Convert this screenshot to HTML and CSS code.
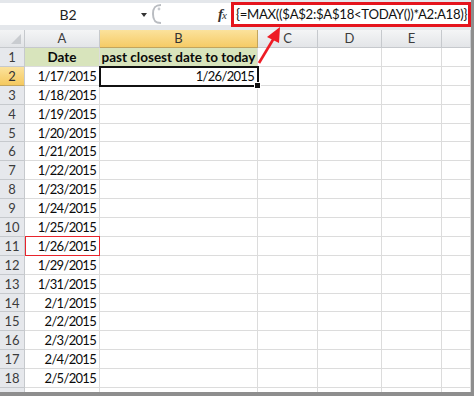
FILE: index.html
```html
<!DOCTYPE html>
<html>
<head>
<meta charset="utf-8">
<link rel="stylesheet" href="styles.css">
</head>
<body>
<div class="app">
  <div class="fbar">
    <div class="namebox"><span class="nb-text">B2</span><span class="caret"></span></div>
    <div class="fxarea">
      <svg class="splitter" width="12" height="20" viewBox="0 0 12 20"><path d="M9 1 C2 1 1 5 1 10 C1 15 2 19 9 19" fill="none" stroke="#b9bcc1" stroke-width="2"/><circle cx="7" cy="5" r="1.4" fill="#c8cbd0"/></svg>
      <span class="fx">f<span class="fx-x">x</span></span>
    </div>
    <div class="formula">{=MAX(($A$2:$A$18&lt;TODAY())*A2:A18)}</div>
  </div>
  <div class="sheet">
    <div class="corner"></div><div class="ch">A</div><div class="ch ch-sel">B</div><div class="ch">C</div><div class="ch">D</div><div class="ch">E</div><div class="ch"></div>

    <div class="rh">1</div><div class="c hdr">Date</div><div class="c hdr">past closest date to today</div><div class="c"></div><div class="c"></div><div class="c"></div><div class="c"></div>
    <div class="rh rh-sel">2</div><div class="c num">1/17/2015</div><div class="c num active">1/26/2015<span class="handle"></span></div><div class="c"></div><div class="c"></div><div class="c"></div><div class="c"></div>
    <div class="rh">3</div><div class="c num">1/18/2015</div><div class="c"></div><div class="c"></div><div class="c"></div><div class="c"></div><div class="c"></div>
    <div class="rh">4</div><div class="c num">1/19/2015</div><div class="c"></div><div class="c"></div><div class="c"></div><div class="c"></div><div class="c"></div>
    <div class="rh">5</div><div class="c num">1/20/2015</div><div class="c"></div><div class="c"></div><div class="c"></div><div class="c"></div><div class="c"></div>
    <div class="rh">6</div><div class="c num">1/21/2015</div><div class="c"></div><div class="c"></div><div class="c"></div><div class="c"></div><div class="c"></div>
    <div class="rh">7</div><div class="c num">1/22/2015</div><div class="c"></div><div class="c"></div><div class="c"></div><div class="c"></div><div class="c"></div>
    <div class="rh">8</div><div class="c num">1/23/2015</div><div class="c"></div><div class="c"></div><div class="c"></div><div class="c"></div><div class="c"></div>
    <div class="rh">9</div><div class="c num">1/24/2015</div><div class="c"></div><div class="c"></div><div class="c"></div><div class="c"></div><div class="c"></div>
    <div class="rh">10</div><div class="c num">1/25/2015</div><div class="c"></div><div class="c"></div><div class="c"></div><div class="c"></div><div class="c"></div>
    <div class="rh">11</div><div class="c num marked">1/26/2015<span class="mark-box"></span></div><div class="c"></div><div class="c"></div><div class="c"></div><div class="c"></div><div class="c"></div>
    <div class="rh">12</div><div class="c num">1/29/2015</div><div class="c"></div><div class="c"></div><div class="c"></div><div class="c"></div><div class="c"></div>
    <div class="rh">13</div><div class="c num">1/31/2015</div><div class="c"></div><div class="c"></div><div class="c"></div><div class="c"></div><div class="c"></div>
    <div class="rh">14</div><div class="c num">2/1/2015</div><div class="c"></div><div class="c"></div><div class="c"></div><div class="c"></div><div class="c"></div>
    <div class="rh">15</div><div class="c num">2/2/2015</div><div class="c"></div><div class="c"></div><div class="c"></div><div class="c"></div><div class="c"></div>
    <div class="rh">16</div><div class="c num">2/3/2015</div><div class="c"></div><div class="c"></div><div class="c"></div><div class="c"></div><div class="c"></div>
    <div class="rh">17</div><div class="c num">2/4/2015</div><div class="c"></div><div class="c"></div><div class="c"></div><div class="c"></div><div class="c"></div>
    <div class="rh">18</div><div class="c num">2/5/2015</div><div class="c"></div><div class="c"></div><div class="c"></div><div class="c"></div><div class="c"></div>
    <div class="rh"></div><div class="c"></div><div class="c"></div><div class="c"></div><div class="c"></div><div class="c"></div><div class="c"></div>
  </div>
  <svg class="arrow" width="474" height="80" viewBox="0 0 474 80">
    <line x1="259" y1="63" x2="274" y2="38" stroke="#ee1c25" stroke-width="2.6"/>
    <polygon points="280,27 267,37 279,43" fill="#ee1c25"/>
  </svg>
</div>
</body>
</html>
```

FILE: styles.css
```css
html, body {
  margin: 0;
  padding: 0;
  background: #ffffff;
}
body {
  width: 474px;
  height: 396px;
  overflow: hidden;
  font-family: Lato, "Liberation Sans", sans-serif;
  color: #111;
}
.app {
  position: relative;
  width: 471px;
  height: 392px;
  border-right: 3px solid #8e8e8e;
  border-bottom: 4px solid #8e8e8e;
  overflow: hidden;
}
.fbar {
  display: flex;
  height: 30px;
  box-sizing: border-box;
  padding: 3px 0 5px 0;
  background: #e4e7eb;
}
.namebox {
  width: 150px;
  background: #fff;
  display: flex;
  align-items: center;
  position: relative;
}
.nb-text {
  width: 136px;
  text-align: center;
  font-size: 14px;
  color: #222;
}
.caret {
  width: 0;
  height: 0;
  border-left: 3px solid transparent;
  border-right: 3px solid transparent;
  border-top: 4px solid #333;
  margin-left: 5px;
  margin-top: 2px;
}
.fxarea {
  width: 81px;
  background: #fff;
  display: flex;
  align-items: center;
  justify-content: space-between;
  padding: 0 5px 0 2px;
  box-sizing: border-box;
}
.splitter {
  display: block;
}
.fx {
  font-family: "Liberation Serif", serif;
  font-style: italic;
  font-weight: bold;
  font-size: 15px;
  color: #333;
  letter-spacing: -1px;
}
.fx-x {
  font-size: 11px;
  font-weight: normal;
}
.formula {
  flex: 1;
  margin: -1px 0 -2px 0;
  border: 3px solid #e5141d;
  background: #fff;
  font-size: 13.2px;
  letter-spacing: -0.3px;
  line-height: 18px;
  padding-left: 2px;
  color: #111;
  white-space: nowrap;
  overflow: hidden;
}
.sheet {
  display: grid;
  grid-template-columns: 25px 75px 158px 60px 64px 60px 29px;
  grid-template-rows: 18px repeat(19, 18.9px);
}
.corner {
  background: linear-gradient(#f3f4f5, #e2e4e7);
  border-right: 1px solid #c6c9cd;
  border-bottom: 1px solid #c6c9cd;
  position: relative;
}
.corner::after {
  content: "";
  position: absolute;
  right: 3px;
  bottom: 3px;
  width: 0;
  height: 0;
  border-left: 10px solid transparent;
  border-bottom: 10px solid #c9ccd0;
}
.ch {
  background: linear-gradient(#f4f5f6, #e3e5e8);
  border-right: 1px solid #c6c9cd;
  border-bottom: 1px solid #c6c9cd;
  text-align: center;
  font-size: 13px;
  line-height: 17px;
  color: #3c3c3c;
}
.ch-sel {
  background: linear-gradient(#fbe29c, #f6cb66);
  border-right-color: #c2a55e;
  border-bottom-color: #c2a55e;
  color: #333;
}
.rh {
  background: #e6e8ec;
  border-right: 1px solid #c6c9cd;
  border-bottom: 1px solid #c6c9cd;
  text-align: center;
  font-size: 13px;
  line-height: 18px;
  color: #3c3c3c;
  box-sizing: border-box;
}
.rh-sel {
  background: linear-gradient(#fbe29c, #f5c95f);
  border-bottom-color: #c2a55e;
  color: #333;
}
.c {
  border-right: 1px solid #dcdcdc;
  border-bottom: 1px solid #dcdcdc;
  font-size: 13px;
  line-height: 18px;
  white-space: nowrap;
  overflow: visible;
  box-sizing: border-box;
  position: relative;
  color: #0a0a0a;
}
.hdr {
  background: #d8e4bc;
  font-weight: bold;
  font-size: 13.5px;
  text-align: center;
}
.num {
  text-align: right;
  padding-right: 3px;
  letter-spacing: -0.7px;
}
.marked {
  z-index: 1;
}
.mark-box {
  position: absolute;
  left: 0;
  top: -1px;
  right: -1px;
  bottom: -1px;
  border: 1px solid #e8242c;
  pointer-events: none;
}
.active {
  outline: 2px solid #111;
  outline-offset: -1px;
  z-index: 2;
}
.handle {
  position: absolute;
  right: -4px;
  bottom: -4px;
  width: 5px;
  height: 5px;
  background: #111;
  border: 1px solid #fff;
}
.arrow {
  position: absolute;
  left: 0;
  top: 0;
  z-index: 5;
  pointer-events: none;
}
```
